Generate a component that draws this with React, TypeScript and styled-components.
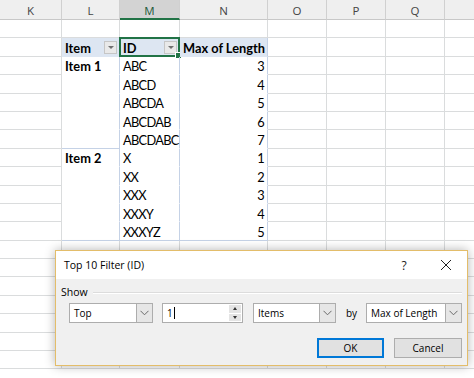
import React from "react";
import styled, { createGlobalStyle } from "styled-components";

const GlobalStyle = createGlobalStyle`
  html, body { margin: 0; padding: 0; background: #ffffff; overflow: hidden; }
  * { box-sizing: border-box; }
`;

const GRID = "#dadcdd";
const PIVOT_LINE = "#c5d2e6";
const PIVOT_BG = "#dde6f2";

const Page = styled.div`
  position: relative;
  width: 474px;
  height: 378px;
  overflow: hidden;
  background: #fff;
`;

const Sheet = styled.div`
  display: grid;
  grid-template-columns: 62px 58px 60px 88px 59px 59px 59px 59px;
  grid-template-rows: 20px repeat(19, 18.4px);
  width: 504px;
  font-family: Lato, "Liberation Sans", sans-serif;
  font-size: 12.8px;
  color: #000;
`;

const HeaderCell = styled.div<{ $sel?: boolean }>`
  display: flex;
  align-items: center;
  justify-content: center;
  background: ${(p) => (p.$sel ? "#d3d3d3" : "#efefef")};
  border-right: 1px solid #d0d0d0;
  border-bottom: ${(p) => (p.$sel ? "2px solid #217346" : "1px solid #c8c8c8")};
  color: ${(p) => (p.$sel ? "#215a38" : "#444")};
  font-family: "Open Sans", "Liberation Sans", sans-serif;
  font-size: 11.5px;
  padding-top: ${(p) => (p.$sel ? "2px" : "1px")};
`;

const Cell = styled.div<{
  $right?: boolean;
  $bold?: boolean;
  $bg?: string;
  $rb?: string;
  $bb?: string;
}>`
  position: relative;
  display: flex;
  align-items: center;
  justify-content: ${(p) => (p.$right ? "flex-end" : "flex-start")};
  padding: 2px 3px 0 3px;
  white-space: nowrap;
  font-weight: ${(p) => (p.$bold ? 700 : 400)};
  letter-spacing: ${(p) => (p.$bold ? "0" : "-0.7px")};
  background: ${(p) => p.$bg || "transparent"};
  border-right: 1px solid ${(p) => p.$rb || GRID};
  border-bottom: 1px solid ${(p) => p.$bb || GRID};
`;

const Selection = styled.div`
  position: absolute;
  left: -1px;
  top: -1px;
  right: -1px;
  bottom: -1px;
  border: 2px solid #217346;
  pointer-events: none;
  &::after {
    content: "";
    position: absolute;
    right: -4px;
    bottom: -4px;
    width: 5px;
    height: 5px;
    background: #217346;
    border: 1px solid #fff;
  }
`;

const FilterBtn = styled.div`
  position: absolute;
  right: 2px;
  top: 3px;
  width: 13px;
  height: 13px;
  background: #e9e9e9;
  border: 1px solid #c6c6c6;
  display: flex;
  align-items: center;
  justify-content: center;
  &::before {
    content: "";
    border-left: 3px solid transparent;
    border-right: 3px solid transparent;
    border-top: 3px solid #707070;
  }
`;

/* Dialog */
const Dialog = styled.div`
  position: absolute;
  left: 55px;
  top: 250px;
  width: 413px;
  height: 116px;
  border: 1px solid #e3bd6a;
  box-shadow: 0 0 10px rgba(0, 0, 0, 0.3);
  background: #f0f0f0;
  display: flex;
  flex-direction: column;
  font-family: "Open Sans", "Noto Sans", sans-serif;
  font-size: 10px;
  color: #000;
`;

const TitleBar = styled.div`
  height: 28px;
  background: #fff;
  display: flex;
  align-items: center;
  padding: 0 0 0 8px;
  font-size: 10.5px;
`;

const Title = styled.div`
  flex: 1;
`;

const TitleIcon = styled.div`
  width: 42px;
  display: flex;
  align-items: center;
  justify-content: center;
  color: #222;
  font-size: 12px;
`;

const Body = styled.div`
  flex: 1;
  display: flex;
  flex-direction: column;
  padding: 6px 5px 0 5px;
`;

const GroupLegend = styled.div`
  display: flex;
  align-items: center;
  height: 14px;
  gap: 5px;
  font-size: 10.5px;
  color: #000;
  &::after {
    content: "";
    flex: 1;
    height: 1px;
    background: #dcdcdc;
    box-shadow: 0 1px 0 #fff;
  }
`;

const ControlRow = styled.div`
  display: flex;
  align-items: center;
  margin: 4px 0 0 8px;
  height: 20px;
`;

const Combo = styled.div<{ $w: number; $ml?: number }>`
  width: ${(p) => p.$w}px;
  margin-left: ${(p) => p.$ml || 0}px;
  height: 20px;
  display: flex;
  background: #fff;
  border: 1px solid #adadad;
`;

const ComboText = styled.div`
  flex: 1;
  display: flex;
  align-items: center;
  padding-left: 4px;
  white-space: nowrap;
  overflow: hidden;
`;

const ComboArrow = styled.div`
  width: 16px;
  background: #e6e6e6;
  border-left: 1px solid #adadad;
  display: flex;
  align-items: center;
  justify-content: center;
`;

const Caret = styled.span`
  display: inline-block;
  width: 1px;
  height: 12px;
  background: #000;
  margin-left: 1px;
`;

const Spin = styled.div`
  width: 14px;
  display: flex;
  flex-direction: column;
  padding: 1px;
  gap: 1px;
`;

const SpinBtn = styled.div<{ $up?: boolean }>`
  flex: 1;
  background: #e4e4e4;
  display: flex;
  align-items: center;
  justify-content: center;
  &::before {
    content: "";
    border-left: 2.5px solid transparent;
    border-right: 2.5px solid transparent;
    ${(p) => (p.$up ? "border-bottom: 3px solid #333;" : "border-top: 3px solid #333;")}
  }
`;

const ByLabel = styled.div`
  width: 30px;
  padding-left: 10px;
`;

const ButtonRow = styled.div`
  display: flex;
  justify-content: flex-end;
  gap: 10px;
  margin-top: 15px;
`;

const Button = styled.div<{ $def?: boolean; $w: number }>`
  width: ${(p) => p.$w}px;
  height: 20px;
  display: flex;
  align-items: center;
  justify-content: center;
  background: #e1e1e1;
  border: ${(p) => (p.$def ? "2px solid #0078d7" : "1px solid #adadad")};
`;

const Chevron = () => (
  <svg width="9" height="6" viewBox="0 0 9 6">
    <path d="M0.5 0.8 L4.5 4.8 L8.5 0.8" fill="none" stroke="#6a6a6a" strokeWidth="1" />
  </svg>
);

const Close = () => (
  <svg width="12" height="12" viewBox="0 0 12 12">
    <path d="M1 1 L11 11 M11 1 L1 11" stroke="#222" strokeWidth="1" fill="none" />
  </svg>
);

const headers = ["K", "L", "M", "N", "O", "P", "Q", ""];

type Row = { l?: string; m?: string; n?: string };
const data: Row[] = [
  { l: "Item 1", m: "ABC", n: "3" },
  { m: "ABCD", n: "4" },
  { m: "ABCDA", n: "5" },
  { m: "ABCDAB", n: "6" },
  { m: "ABCDABC", n: "7" },
  { l: "Item 2", m: "X", n: "1" },
  { m: "XX", n: "2" },
  { m: "XXX", n: "3" },
  { m: "XXXY", n: "4" },
  { m: "XXXYZ", n: "5" },
];

const EmptyRest = () => (
  <>
    <Cell />
    <Cell />
    <Cell />
    <Cell />
  </>
);

export default function App() {
  const rows: React.ReactNode[] = [];
  for (let c = 0; c < 8; c++) rows.push(<Cell key={`e0-${c}`} />);
  rows.push(<Cell key="h-k" />);
  rows.push(
    <Cell key="h-l" $bold $bg={PIVOT_BG} $rb={PIVOT_LINE} $bb="transparent">
      Item
      <FilterBtn />
    </Cell>
  );
  rows.push(
    <Cell key="h-m" $bold $bg={PIVOT_BG} $rb={PIVOT_LINE} $bb="transparent">
      ID
      <FilterBtn />
      <Selection />
    </Cell>
  );
  rows.push(
    <Cell key="h-n" $bold $bg={PIVOT_BG} $rb={PIVOT_LINE} $bb="transparent">
      Max of Length
    </Cell>
  );
  rows.push(<EmptyRest key="h-rest" />);
  data.forEach((r, i) => {
    const last = i === data.length - 1;
    const beforeGroup = i === 4;
    const bb = last ? PIVOT_LINE : "#ffffff";
    rows.push(<Cell key={`k${i}`} />);
    rows.push(
      <Cell key={`l${i}`} $bold $rb={PIVOT_LINE} $bb={beforeGroup || last ? PIVOT_LINE : "#ffffff"}>
        {r.l}
      </Cell>
    );
    rows.push(
      <Cell key={`m${i}`} $rb={PIVOT_LINE} $bb={bb}>
        {r.m}
      </Cell>
    );
    rows.push(
      <Cell key={`n${i}`} $right $rb={PIVOT_LINE} $bb={bb}>
        {r.n}
      </Cell>
    );
    rows.push(<EmptyRest key={`rest${i}`} />);
  });
  for (let r = 0; r < 7; r++)
    for (let c = 0; c < 8; c++) rows.push(<Cell key={`t${r}-${c}`} />);

  return (
    <Page>
      <GlobalStyle />
      <Sheet>
        {headers.map((h, i) => (
          <HeaderCell key={i} $sel={h === "M"}>
            {h}
          </HeaderCell>
        ))}
        {rows}
      </Sheet>
      <Dialog>
        <TitleBar>
          <Title>Top 10 Filter (ID)</Title>
          <TitleIcon>?</TitleIcon>
          <TitleIcon>
            <Close />
          </TitleIcon>
        </TitleBar>
        <Body>
          <GroupLegend>Show</GroupLegend>
          <ControlRow>
            <Combo $w={84}>
              <ComboText>Top</ComboText>
              <ComboArrow>
                <Chevron />
              </ComboArrow>
            </Combo>
            <Combo $w={81} $ml={9}>
              <ComboText>
                1<Caret />
              </ComboText>
              <Spin>
                <SpinBtn $up />
                <SpinBtn />
              </Spin>
            </Combo>
            <Combo $w={83} $ml={10}>
              <ComboText>Items</ComboText>
              <ComboArrow>
                <Chevron />
              </ComboArrow>
            </Combo>
            <ByLabel>by</ByLabel>
            <Combo $w={96}>
              <ComboText>Max of Length</ComboText>
              <ComboArrow>
                <Chevron />
              </ComboArrow>
            </Combo>
          </ControlRow>
          <ButtonRow>
            <Button $def $w={67}>
              OK
            </Button>
            <Button $w={68}>Cancel</Button>
          </ButtonRow>
        </Body>
      </Dialog>
    </Page>
  );
}
